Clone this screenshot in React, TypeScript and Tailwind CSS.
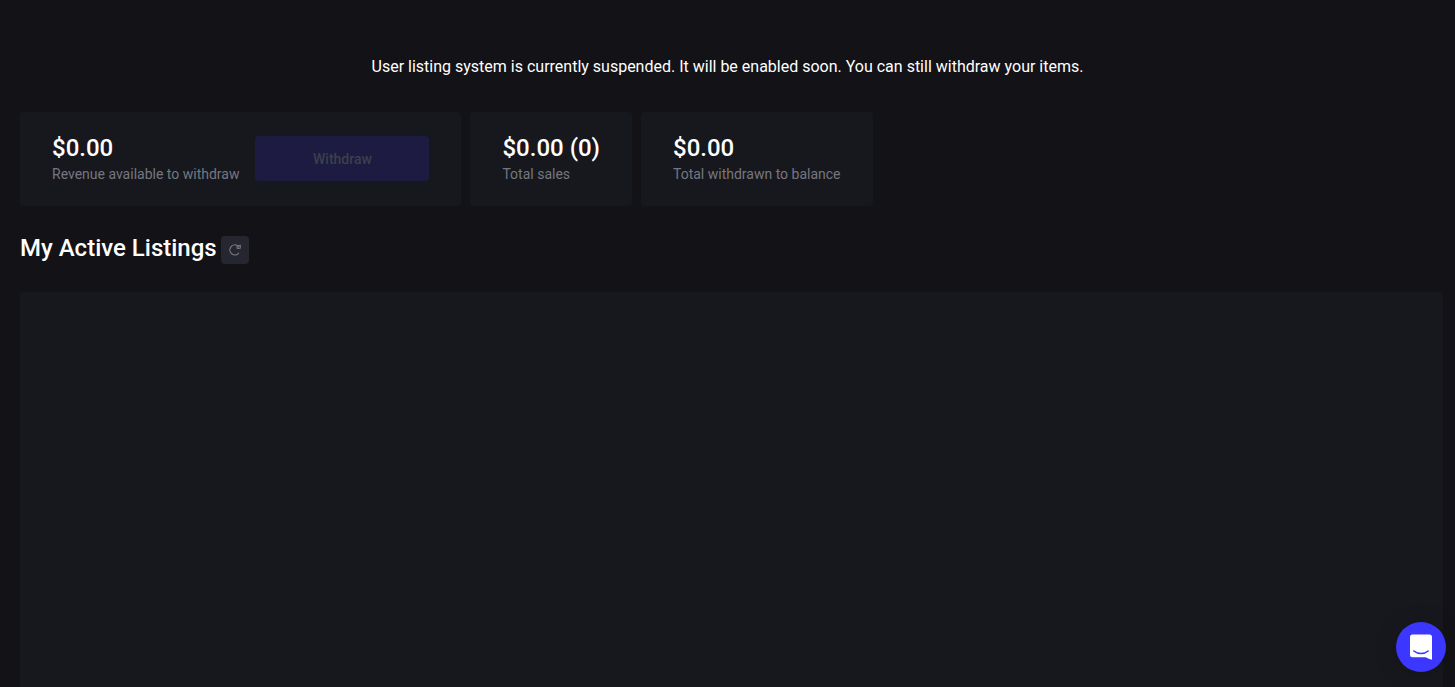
import type { ReactNode } from 'react'

const stats = [
  { value: '$0.00', label: 'Revenue available to withdraw', canWithdraw: true },
  { value: '$0.00 (0)', label: 'Total sales' },
  { value: '$0.00', label: 'Total withdrawn to balance' },
]

function StatCard({ value, label, children }: { value: string; label: string; children?: ReactNode }) {
  return (
    <div className="flex items-start gap-4 rounded bg-[#17181d] px-8 pt-6 pb-[22px]">
      <div className="whitespace-nowrap">
        <p className="text-2xl leading-6 font-medium text-white">{value}</p>
        <p className="mt-1 text-sm text-[#757780]">{label}</p>
      </div>
      {children}
    </div>
  )
}

function RefreshIcon() {
  return (
    <svg className="size-3" viewBox="0 0 12 12" fill="none" stroke="currentColor" strokeWidth="1.2" aria-hidden="true">
      <path d="M9.900 8.900A5 5 0 1 1 8.600 1.700L10 3.200" />
      <path d="M11.300 1v3.400H7.900V2.400z" fill="currentColor" fillOpacity="0.3" strokeWidth="1" />
    </svg>
  )
}

function ChatIcon() {
  return (
    <svg className="h-7 w-6" viewBox="0 0 24 28" aria-hidden="true">
      <path d="M3.500 1.500h17a2.500 2.500 0 0 1 2.500 2.500v22.700s-2.800-.7-6.500-2.500h-13A2.500 2.500 0 0 1 1 21.700V4a2.500 2.500 0 0 1 2.500-2.500z" fill="#fff" />
      <path d="M4.800 18c4.200 3.400 10.200 3.400 14.400 0" fill="none" stroke="#3b37ff" strokeWidth="1.500" strokeLinecap="round" />
    </svg>
  )
}

export default function App() {
  return (
    <div className="flex min-h-screen flex-col bg-[#131217] font-['Roboto',sans-serif] text-white">
      <p className="pt-[55px] pb-[33px] text-center text-base">
        User listing system is currently suspended. It will be enabled soon. You can still withdraw your items.
      </p>

      <main className="flex grow flex-col pr-3 pl-5">
        <div className="flex flex-wrap gap-[9px]">
          {stats.map((stat) => (
            <StatCard key={stat.label} value={stat.value} label={stat.label}>
              {stat.canWithdraw && (
                <button
                  type="button"
                  disabled
                  className="h-[45px] w-[174px] rounded bg-[#1d1b41] text-sm font-medium text-[#3f3f49]"
                >
                  Withdraw
                </button>
              )}
            </StatCard>
          ))}
        </div>

        <div className="mt-[26px] flex items-end gap-1">
          <h2 className="text-2xl font-medium">My Active Listings</h2>
          <button
            type="button"
            aria-label="Refresh listings"
            className="flex size-7 items-center justify-center rounded bg-[#262631] text-[#757780]"
          >
            <RefreshIcon />
          </button>
        </div>

        <div className="mt-7 grow rounded-t bg-[#17181d]" />
      </main>

      <button
        type="button"
        aria-label="Open chat"
        className="fixed right-[9px] bottom-[15px] flex size-[50px] items-center justify-center rounded-full bg-[#3b37ff] shadow-[0_2px_24px_rgba(0,0,0,0.15)]"
      >
        <ChatIcon />
      </button>
    </div>
  )
}
